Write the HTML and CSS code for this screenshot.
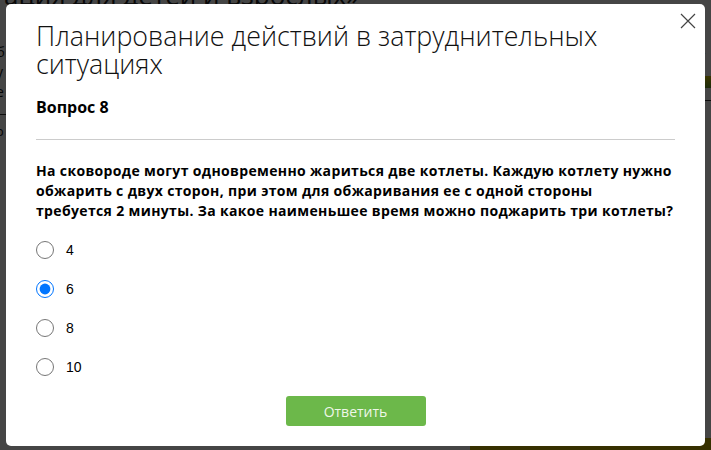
FILE: index.html
```html
<!DOCTYPE html>
<html lang="ru">
<head>
    <meta charset="UTF-8">
    <meta name="viewport" content="width=device-width, initial-scale=1.0">
    <title>Планирование действий в затруднительных ситуациях</title>
    <link rel="stylesheet" href="styles.css">
</head>
<body>
<div class="page">
    <div class="page-title">ация для детей и взрослых»</div>
    <div class="page-body">
        <div class="page-left">
            <p>об</p>
            <p>ду</p>
            <p>ве</p>
            <div class="page-rule"></div>
            <p class="small">ор</p>
        </div>
        <div class="page-right">
            <p>у</p>
            <div class="page-bar"></div>
            <div class="page-rule"></div>
        </div>
    </div>
    <div class="page-footer"></div>
</div>
<div class="overlay"></div>
<div class="modal">
    <button class="modal-close" aria-label="Закрыть">
        <svg width="16" height="16" viewBox="0 0 16 16">
            <path d="M1 1 L15 15 M15 1 L1 15" stroke="#444" stroke-width="1.2" fill="none"/>
        </svg>
    </button>
    <h1>Планирование действий в затруднительных ситуациях</h1>
    <h2>Вопрос 8</h2>
    <div class="divider"></div>
    <p class="question">На сковороде могут одновременно жариться две котлеты. Каждую котлету нужно обжарить с двух сторон, при этом для обжаривания ее с одной стороны <span class="nowrap">требуется 2 минуты.</span> За какое наименьшее время можно поджарить три котлеты?</p>
    <form class="answers">
        <label class="answer"><input type="radio" name="q8" value="4"><span>4</span></label>
        <label class="answer"><input type="radio" name="q8" value="6" checked><span>6</span></label>
        <label class="answer"><input type="radio" name="q8" value="8"><span>8</span></label>
        <label class="answer"><input type="radio" name="q8" value="10"><span>10</span></label>
    </form>
    <div class="actions">
        <button class="submit" type="button">Ответить</button>
    </div>
</div>
</body>
</html>
```

FILE: styles.css
```css
body {
    margin: 0;
    width: 711px;
    height: 450px;
    overflow: hidden;
    background: #FFFFFF;
    font-family: 'Open Sans', sans-serif;
}

.page {
    height: 450px;
    display: flex;
    flex-direction: column;
}

.page-title {
    margin-top: -16px;
    padding-left: 4px;
    font-size: 26px;
    line-height: 22px;
    color: #222222;
}

.page-body {
    flex: 1;
    display: flex;
    justify-content: space-between;
}

.page-left {
    width: 50px;
    margin-left: -12px;
    padding-top: 36px;
    font-size: 14px;
    color: #111111;
}

.page-left p {
    margin: 0;
    white-space: nowrap;
    line-height: 20px;
}

.page-left .small {
    font-size: 13px;
    margin-top: 6px;
}

.page-rule {
    height: 1px;
    background: #333333;
    margin-top: 12px;
}

.page-right {
    width: 30px;
    padding-top: 40px;
    font-size: 18px;
    color: #111111;
}

.page-right p {
    margin: 0;
    padding-left: 15px;
    line-height: 20px;
}

.page-bar {
    margin-top: 10px;
    height: 12px;
    background: linear-gradient(#d8c400, #6aa32a);
}

.page-footer {
    height: 12px;
    margin-left: 470px;
    background: #c9b000;
}

.overlay {
    position: fixed;
    inset: 0;
    background: rgba(0, 0, 0, 0.73);
}

.modal {
    position: absolute;
    top: 4px;
    left: 6px;
    width: 699px;
    height: 442px;
    box-sizing: border-box;
    padding: 18px 30px 0 30px;
    background: #FFFFFF;
    border-radius: 5px;
    color: #000000;
}

.modal-close {
    position: absolute;
    top: 9px;
    right: 9px;
    background: none;
    border: none;
    padding: 0;
    cursor: pointer;
    line-height: 0;
}

.modal h1 {
    margin: 0;
    font-size: 26.8px;
    font-weight: 300;
    line-height: 28px;
    color: #111111;
}

.modal h2 {
    margin: 18px 0 0 0;
    font-size: 16px;
    font-weight: 700;
    line-height: 22px;
}

.divider {
    height: 1px;
    background: #CCCCCC;
    margin-top: 21px;
}

.question {
    margin: 21px 0 0 0;
    font-size: 14px;
    font-weight: 700;
    line-height: 20px;
    letter-spacing: 0.35px;
}

.nowrap {
    white-space: nowrap;
}

.answers {
    margin-top: 20px;
    display: flex;
    flex-direction: column;
    gap: 21px;
}

.answer {
    display: flex;
    align-items: center;
    gap: 12px;
    height: 18px;
    font-family: 'Liberation Sans', Arial, sans-serif;
    font-size: 14px;
    cursor: pointer;
}

.answer input {
    width: 18px;
    height: 18px;
    margin: 0;
}

.actions {
    display: flex;
    justify-content: center;
    margin-top: 20px;
}

.submit {
    width: 140px;
    height: 30px;
    background: #6CB84A;
    color: #EEF7E8;
    border: none;
    border-radius: 3px;
    font-family: 'Open Sans', sans-serif;
    font-size: 14px;
    cursor: pointer;
}
```
